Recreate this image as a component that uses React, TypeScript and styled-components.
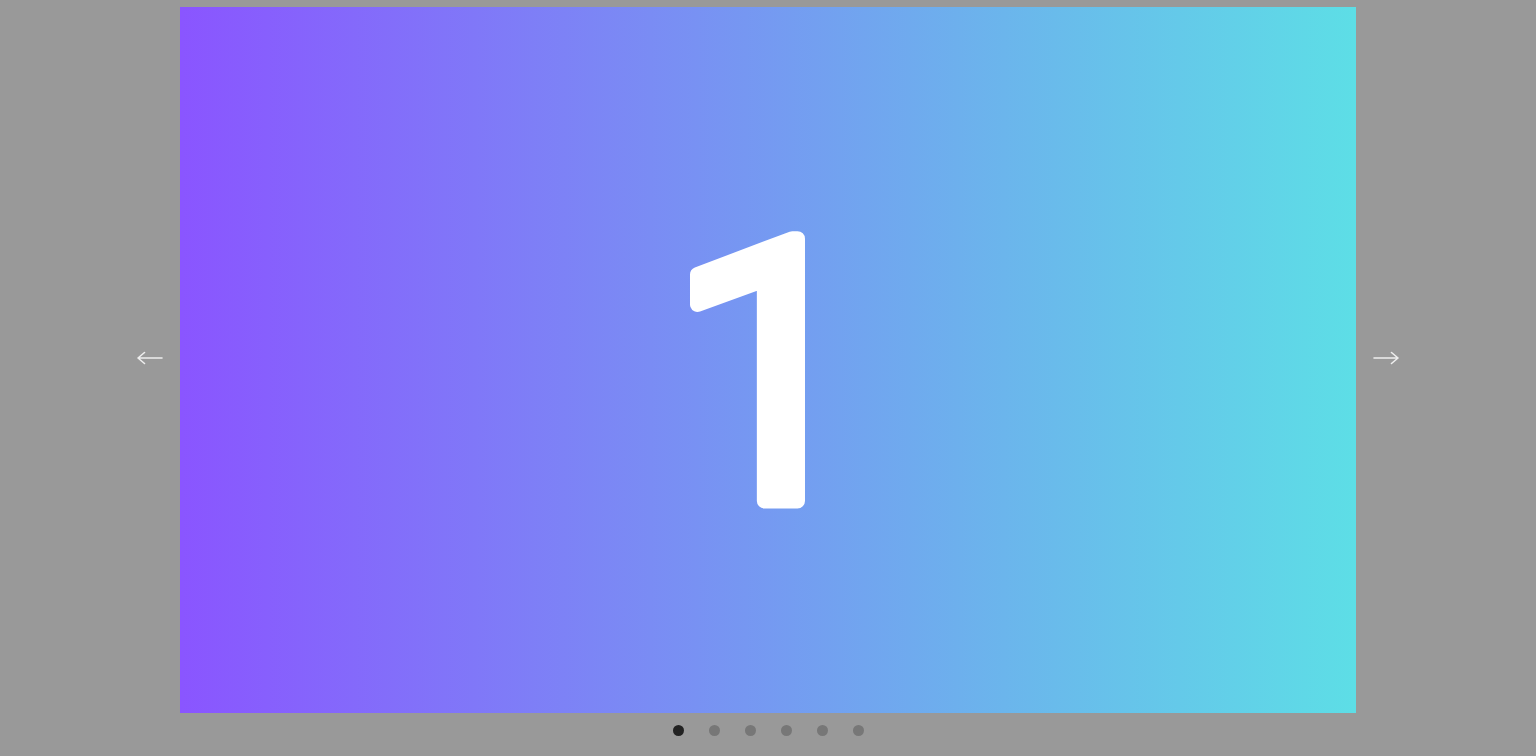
import React, { useState } from 'react'
import styled, { createGlobalStyle } from 'styled-components'

const slides = [1, 2, 3, 4, 5, 6]

const GlobalStyle = createGlobalStyle`
    html, body {
        margin: 0;
        padding: 0;
        background: #999999;
        font-family: "Inter", "Liberation Sans", sans-serif;
    }
`

const Arrow = ({ dir }: { dir: 'left' | 'right' }) => (
    <svg width="26" height="14" viewBox="0 0 26 14" fill="none" stroke="#eeeeee" strokeWidth="1.6" strokeLinecap="round" strokeLinejoin="round">
        {dir === 'left'
            ? <path d="M25 7H1M7.5 1.5L1 7l6.5 5.5" />
            : <path d="M1 7h24M18.5 1.5L25 7l-6.5 5.5" />}
    </svg>
)

const App = () => {
    const [active, setActive] = useState(0)

    const prev = () => setActive(i => (i + slides.length - 1) % slides.length)
    const next = () => setActive(i => (i + 1) % slides.length)

    return (
        <Page>
            <GlobalStyle />
            <Carousel>
                <NavButton aria-label="previous" onClick={prev}><Arrow dir="left" /></NavButton>
                <Slide>
                    <svg width="100%" height="100%" viewBox="0 0 1176 706">
                        <Digit x="590" y="494" textAnchor="middle">{slides[active]}</Digit>
                    </svg>
                </Slide>
                <NavButton aria-label="next" onClick={next}><Arrow dir="right" /></NavButton>
            </Carousel>
            <Dots>
                {slides.map((s, i) => (
                    <Dot key={s} active={i === active} onClick={() => setActive(i)} />
                ))}
            </Dots>
        </Page>
    )
}

export default App

const Page = styled.div`
    display: flex;
    flex-direction: column;
    align-items: center;
    padding-top: 7px;
    min-height: 100vh;
    box-sizing: border-box;
`

const Carousel = styled.div`
    display: flex;
    align-items: center;
`

const NavButton = styled.button`
    width: 60px;
    height: 60px;
    margin-top: -4px;
    display: flex;
    align-items: center;
    justify-content: center;
    background: none;
    border: none;
    padding: 0;
    cursor: pointer;
`

const Slide = styled.div`
    width: 1176px;
    height: 706px;
    background: linear-gradient(90deg, #8a55ff 0%, #7a8cf4 40%, #6bb5ec 70%, #5ddee6 100%);
`

const Digit = styled.text`
    font-family: "Roboto", "Inter", sans-serif;
    font-weight: 400;
    font-size: 367px;
    fill: #ffffff;
    stroke: #ffffff;
    stroke-width: 15px;
    stroke-linejoin: round;
`

const Dots = styled.div`
    display: flex;
    gap: 25px;
    margin-top: 12px;
`

const Dot = styled(({ active, ...props }: { active: boolean } & React.HTMLAttributes<HTMLSpanElement>) => <span {...props} />)`
    width: 11px;
    height: 11px;
    border-radius: 50%;
    background: ${props => props.active ? '#222222' : '#777777'};
    cursor: pointer;
`
